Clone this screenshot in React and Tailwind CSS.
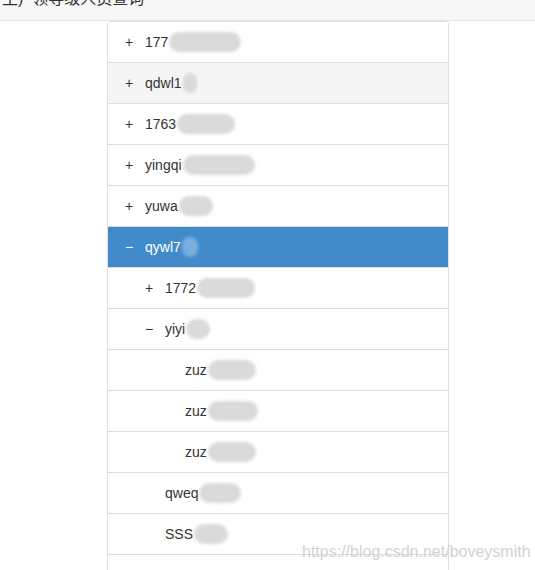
import React from "react";

const rows = [
  { level: 0, icon: "+", text: "177", blob: "w-[72px]" },
  { level: 0, icon: "+", text: "qdwl1", blob: "w-[14px]", hover: true },
  { level: 0, icon: "+", text: "1763", blob: "w-[58px]" },
  { level: 0, icon: "+", text: "yingqi", blob: "w-[72px]" },
  { level: 0, icon: "+", text: "yuwa", blob: "w-[34px]" },
  { level: 0, icon: "−", text: "qywl7", blob: "w-[16px]", selected: true },
  { level: 1, icon: "+", text: "1772", blob: "w-[58px]" },
  { level: 1, icon: "−", text: "yiyi", blob: "w-[24px]" },
  { level: 2, icon: "", text: "zuz", blob: "w-[48px]" },
  { level: 2, icon: "", text: "zuz", blob: "w-[50px]" },
  { level: 2, icon: "", text: "zuz", blob: "w-[48px]" },
  { level: 1, icon: "", text: "qweq", blob: "w-[42px]" },
  { level: 1, icon: "", text: "SSS", blob: "w-[34px]" },
];

const indents = ["pl-[17px]", "pl-[37px]", "pl-[57px]"];

const TreeRow = ({ row }) => {
  const bg = row.selected
    ? "bg-[#428bca] text-white"
    : row.hover
    ? "bg-[#f5f5f5] text-[#333]"
    : "bg-white text-[#333]";
  return (
    <div className={`flex h-[41px] items-center border-b border-[#ddd] ${indents[row.level]} ${bg}`}>
      <span className="w-5 shrink-0">{row.icon}</span>
      {row.level === 2 && <span className="w-0" />}
      <span>{row.text}</span>
      <span
        className={`ml-[1px] inline-block h-[20px] rounded-full blur-[1.5px] ${row.blob} ${
          row.selected ? "bg-[#7aaee0]" : "bg-[#dadada]"
        }`}
      />
    </div>
  );
};

const App = () => {
  return (
    <div className="relative h-[570px] w-[535px] overflow-hidden bg-white font-['Liberation_Sans','Noto_Sans_CJK_SC',sans-serif] text-[14px]">
      {/* page title strip, mostly scrolled away */}
      <div className="h-[21px] overflow-hidden border-b border-[#e5e5e5] bg-[#f7f7f7]">
        <div className="-mt-[11px] pl-[2px] text-[16px] leading-[20px] text-[#333]">
          主)&nbsp;&nbsp;领导级人员查询
        </div>
      </div>

      <div className="ml-[107px] w-[342px] rounded-t-[4px] border-l border-r border-t border-[#ddd]">
        {rows.map((row, i) => (
          <TreeRow key={i} row={row} />
        ))}
        <div className="h-[41px] bg-white" />
      </div>

      {/* watermark */}
      <div className="absolute left-[302px] top-[541px] text-[16px] leading-[22px] text-[#d2d2d2]">
        https://blog.csdn.net/boveysmith
      </div>
    </div>
  );
};

export default App;
